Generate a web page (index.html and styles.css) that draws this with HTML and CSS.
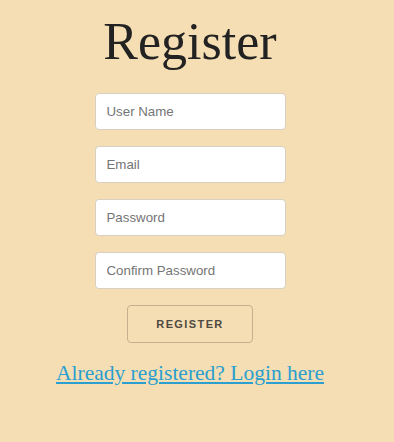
FILE: index.html
```html
<!DOCTYPE html>
<html>
<head>
<meta charset="utf-8">
<link rel="stylesheet" href="styles.css">
</head>
<body>
<div class="page">
  <h1 class="title">Register</h1>
  <form class="form">
    <input class="field" type="text" placeholder="User Name">
    <input class="field" type="email" placeholder="Email">
    <input class="field" type="password" placeholder="Password">
    <input class="field" type="password" placeholder="Confirm Password">
    <button class="btn" type="button">REGISTER</button>
  </form>
  <a class="login" href="#">Already registered? Login here</a>
</div>
</body>
</html>
```
FILE: styles.css
```css
html, body {
  margin: 0;
  padding: 0;
  background: #f5deb3;
}
.page {
  display: flex;
  flex-direction: column;
  align-items: center;
  width: 380px;
  height: 442px;
}
.title {
  margin: 12px 0 0 0;
  font-family: "Liberation Serif", serif;
  font-weight: normal;
  font-size: 52px;
  line-height: 60px;
  color: #222;
}
.form {
  display: flex;
  flex-direction: column;
  align-items: center;
  gap: 16px;
  margin-top: 21px;
}
.field {
  box-sizing: border-box;
  width: 191px;
  height: 37px;
  padding: 0 11px;
  border: 1px solid #d6cfc2;
  border-radius: 4px;
  background: #fff;
  font-family: "Liberation Sans", Arial, sans-serif;
  font-size: 13.3px;
  color: #333;
  outline: none;
}
.field::placeholder {
  color: #757575;
}
.btn {
  box-sizing: border-box;
  width: 126px;
  height: 38px;
  border: 1px solid #c4b08f;
  border-radius: 4px;
  background: transparent;
  font-family: "Liberation Sans", Arial, sans-serif;
  font-size: 11px;
  font-weight: bold;
  letter-spacing: 1.4px;
  color: #4f4a42;
  cursor: pointer;
}
.login {
  margin-top: 18px;
  font-family: "Liberation Serif", serif;
  font-size: 21.5px;
  line-height: 24px;
  color: #2a9fd0;
  text-decoration: underline;
}
```
